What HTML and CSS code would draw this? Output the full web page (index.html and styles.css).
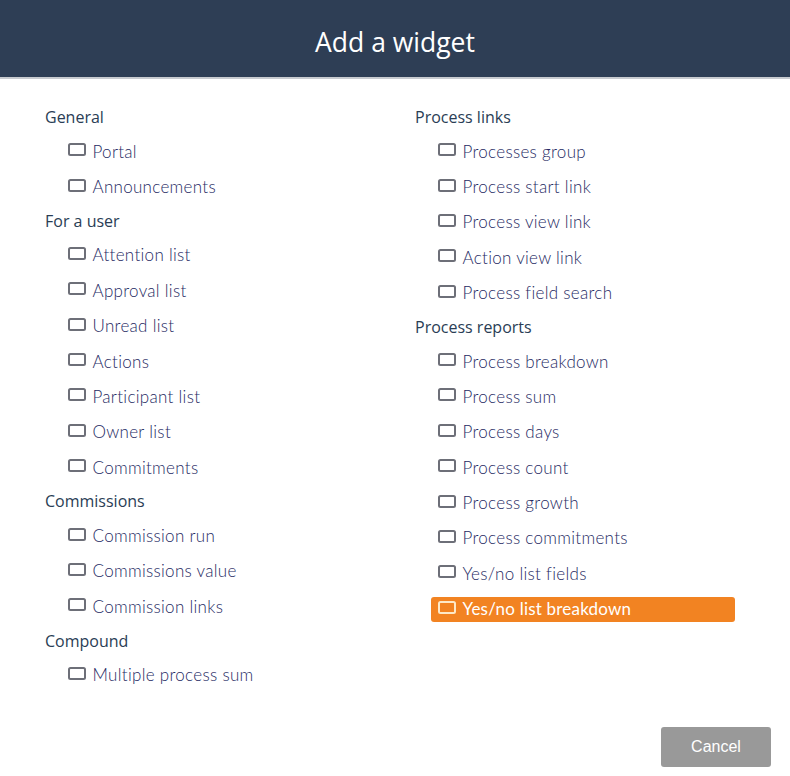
FILE: index.html
```html
<!DOCTYPE html>
<html lang="en">
<head>
    <meta charset="UTF-8">
    <title>Add a widget</title>
    <link rel="stylesheet" href="styles.css">
</head>
<body>
    <svg class="icon-defs" width="0" height="0" aria-hidden="true">
        <symbol id="widget" viewBox="0 0 18 13">
            <rect x="1" y="1" width="16" height="11" rx="1.5" fill="none" stroke="currentColor" stroke-width="2"/>
        </symbol>
    </svg>

    <!-- Header -->
    <header class="dialog-header">
        <h1>Add a widget</h1>
    </header>

    <!-- Widget lists -->
    <main class="widget-columns">
        <section class="widget-column">
            <h2>General</h2>
            <a class="widget-item"><svg class="widget-icon"><use href="#widget"/></svg>Portal</a>
            <a class="widget-item"><svg class="widget-icon"><use href="#widget"/></svg>Announcements</a>
            <h2>For a user</h2>
            <a class="widget-item"><svg class="widget-icon"><use href="#widget"/></svg>Attention list</a>
            <a class="widget-item"><svg class="widget-icon"><use href="#widget"/></svg>Approval list</a>
            <a class="widget-item"><svg class="widget-icon"><use href="#widget"/></svg>Unread list</a>
            <a class="widget-item"><svg class="widget-icon"><use href="#widget"/></svg>Actions</a>
            <a class="widget-item"><svg class="widget-icon"><use href="#widget"/></svg>Participant list</a>
            <a class="widget-item"><svg class="widget-icon"><use href="#widget"/></svg>Owner list</a>
            <a class="widget-item"><svg class="widget-icon"><use href="#widget"/></svg>Commitments</a>
            <h2>Commissions</h2>
            <a class="widget-item"><svg class="widget-icon"><use href="#widget"/></svg>Commission run</a>
            <a class="widget-item"><svg class="widget-icon"><use href="#widget"/></svg>Commissions value</a>
            <a class="widget-item"><svg class="widget-icon"><use href="#widget"/></svg>Commission links</a>
            <h2>Compound</h2>
            <a class="widget-item"><svg class="widget-icon"><use href="#widget"/></svg>Multiple process sum</a>
        </section>

        <section class="widget-column">
            <h2>Process links</h2>
            <a class="widget-item"><svg class="widget-icon"><use href="#widget"/></svg>Processes group</a>
            <a class="widget-item"><svg class="widget-icon"><use href="#widget"/></svg>Process start link</a>
            <a class="widget-item"><svg class="widget-icon"><use href="#widget"/></svg>Process view link</a>
            <a class="widget-item"><svg class="widget-icon"><use href="#widget"/></svg>Action view link</a>
            <a class="widget-item"><svg class="widget-icon"><use href="#widget"/></svg>Process field search</a>
            <h2>Process reports</h2>
            <a class="widget-item"><svg class="widget-icon"><use href="#widget"/></svg>Process breakdown</a>
            <a class="widget-item"><svg class="widget-icon"><use href="#widget"/></svg>Process sum</a>
            <a class="widget-item"><svg class="widget-icon"><use href="#widget"/></svg>Process days</a>
            <a class="widget-item"><svg class="widget-icon"><use href="#widget"/></svg>Process count</a>
            <a class="widget-item"><svg class="widget-icon"><use href="#widget"/></svg>Process growth</a>
            <a class="widget-item"><svg class="widget-icon"><use href="#widget"/></svg>Process commitments</a>
            <a class="widget-item"><svg class="widget-icon"><use href="#widget"/></svg>Yes/no list fields</a>
            <a class="widget-item active"><svg class="widget-icon"><use href="#widget"/></svg>Yes/no list breakdown</a>
        </section>
    </main>

    <!-- Footer -->
    <footer class="dialog-footer">
        <button class="cancel-btn">Cancel</button>
    </footer>
</body>
</html>
```

FILE: styles.css
```css
html, body {
    height: 776px;
}

body {
    margin: 0;
    display: flex;
    flex-direction: column;
    overflow: hidden;
    background-color: #fff;
    font-family: "Open Sans", sans-serif;
}

.icon-defs {
    position: absolute;
}

/* Header */
.dialog-header {
    height: 79px;
    padding-top: 6px;
    box-sizing: border-box;
    flex-shrink: 0;
    display: flex;
    align-items: center;
    justify-content: center;
    background-color: #2e3e55;
    border-bottom: 2px solid #c8cbd0;
}

.dialog-header h1 {
    margin: 0;
    color: #fff;
    font-size: 26.5px;
    font-weight: 400;
}

/* Widget lists */
.widget-columns {
    flex: 1;
    display: flex;
    padding-top: 22px;
    padding-left: 45px;
}

.widget-column {
    width: 370px;
    display: flex;
    flex-direction: column;
}

.widget-column h2 {
    margin: 0;
    height: 33px;
    line-height: 33px;
    color: #2a3d55;
    font-size: 16px;
    font-weight: 400;
}

.widget-item {
    flex-shrink: 0;
    width: 304px;
    height: 25px;
    margin: 5.2px 0 5.2px 16px;
    padding: 0 0 1px 7px;
    box-sizing: border-box;
    display: flex;
    align-items: center;
    border-radius: 3px;
    color: #262a63;
    font-family: Lato, sans-serif;
    font-size: 17px;
    font-weight: 300;
    letter-spacing: 0.3px;
    cursor: pointer;
}

.widget-icon {
    width: 18px;
    height: 13px;
    margin-right: 6.5px;
    margin-top: -3px;
    color: #6d6f78;
}

.widget-item.active {
    background-color: #f28322;
    color: #fff;
    font-weight: 400;
    letter-spacing: 0.2px;
}

.widget-item.active .widget-icon {
    color: #fde9c8;
}

/* Footer */
.dialog-footer {
    display: flex;
    justify-content: flex-end;
    padding: 0 19px 9px 0;
}

.cancel-btn {
    width: 110px;
    height: 40px;
    border: none;
    border-radius: 3px;
    background-color: #999;
    color: #fff;
    font-family: "Liberation Sans", Arial, sans-serif;
    font-size: 16px;
    cursor: pointer;
}
```
